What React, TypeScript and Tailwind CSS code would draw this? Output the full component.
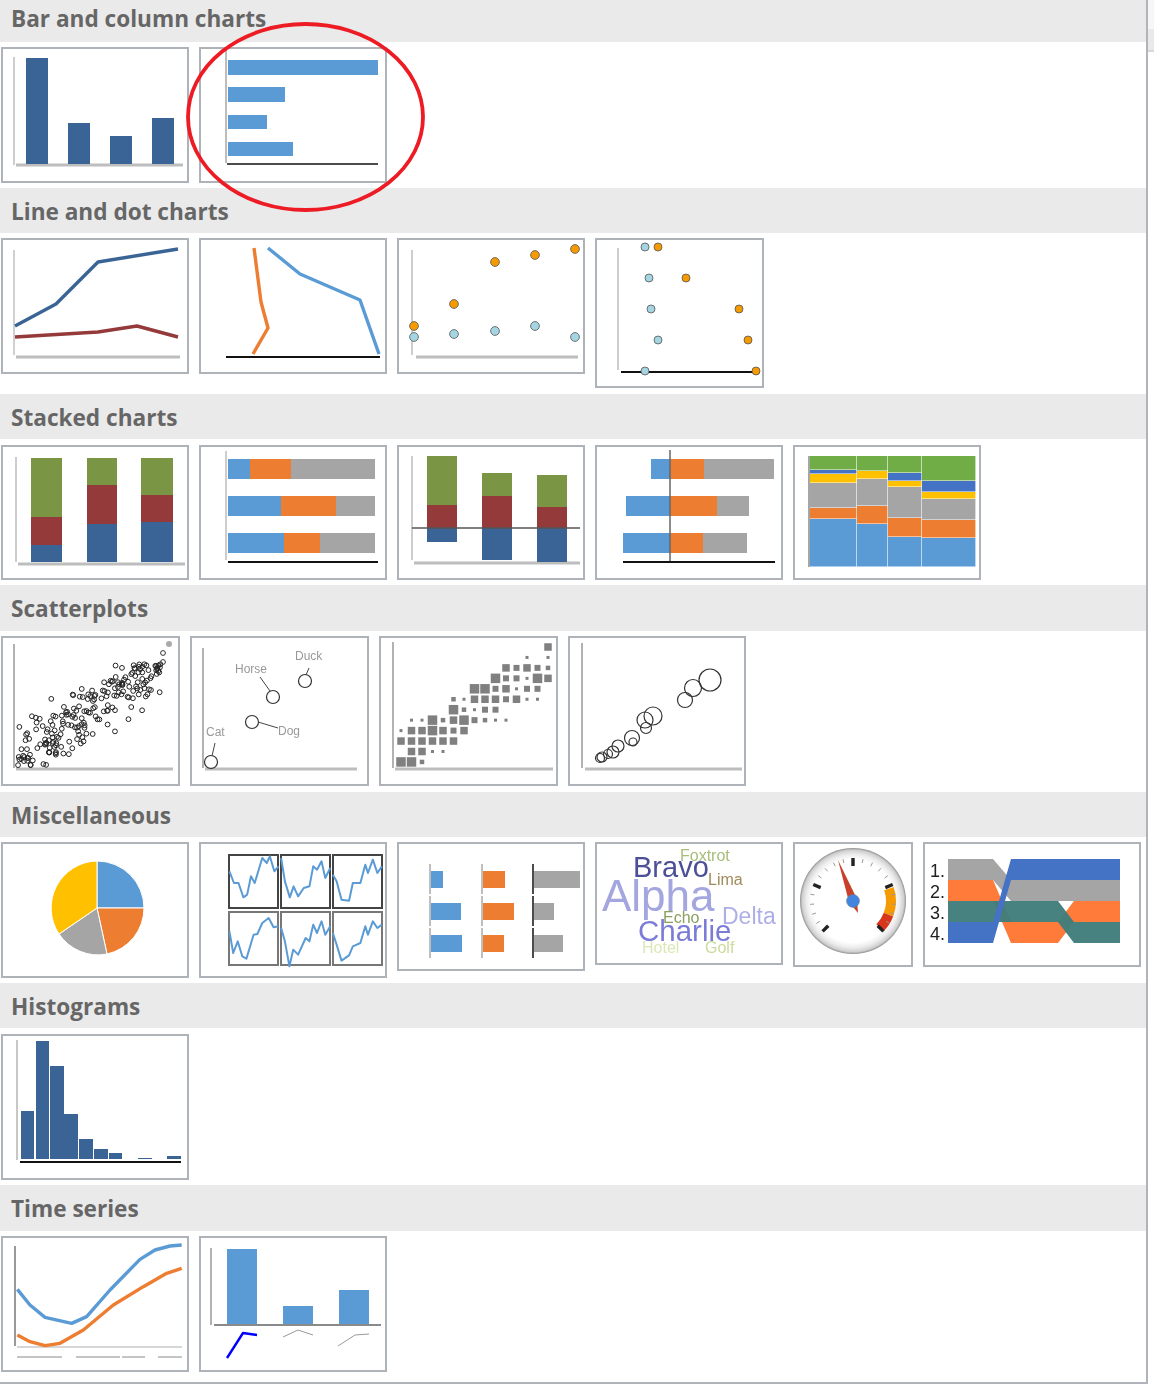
import { ReactNode } from "react";

const BLUE = "#5b9bd5";
const NAVY = "#3b6496";
const ORANGE = "#ed7d31";
const GRAY = "#a5a5a5";
const OLIVE = "#7a9645";
const MAROON = "#953a3a";

type Pt = number[];
// points read off the zoomed crops, scaled back to page pixels
const zp = (list: Pt[], sx: number, y0: number, sy = 3, x0 = 0) =>
  list.map(([x, y]) => `${x0 + x / sx},${y0 + y / sy}`).join(" ");

const Bar = ({ x, y, x2, y2, c, o }: { x: number; y: number; x2: number; y2: number; c: string; o?: number }) => (
  <rect x={x} y={y} width={x2 - x} height={y2 - y} fill={c} opacity={o} />
);
const Ln = ({ x1, y1, x2, y2, c = "#bdbdbd", w = 1.5 }: { x1: number; y1: number; x2: number; y2: number; c?: string; w?: number }) => (
  <line x1={x1} y1={y1} x2={x2} y2={y2} stroke={c} strokeWidth={w} />
);
const Poly = ({ pts, c, w = 3.4 }: { pts: string; c: string; w?: number }) => (
  <polyline points={pts} fill="none" stroke={c} strokeWidth={w} strokeLinejoin="round" />
);

const Card = ({ x, y, w, h, children }: { x: number; y: number; w: number; h: number; children?: ReactNode }) => (
  <div className="shrink-0 border-2 border-[#aeb2b9] bg-white">
    <svg width={w - 4} height={h - 4} viewBox={`${x + 2} ${y + 2} ${w - 4} ${h - 4}`} className="block blur-[0.6px]">
      {children}
    </svg>
  </div>
);

const Section = ({ title, headClass, rowClass, children }: { title: string; headClass: string; rowClass: string; children: ReactNode }) => (
  <section>
    <h2
      className={`flex items-center bg-[#eaeaea] pl-[11px] font-['Open_Sans','Noto_Sans',sans-serif] text-[22.6px] font-bold text-[#666666] ${headClass}`}
    >
      {title}
    </h2>
    <div className={`flex items-start gap-[10px] pl-px ${rowClass}`}>{children}</div>
  </section>
);

const BarColumn = () => (
  <Card x={1} y={47} w={188} h={136}>
    <Ln x1={14} y1={57} x2={14} y2={165} />
    <Ln x1={16} y1={165} x2={183} y2={165} w={3} />
    <Bar x={26} y={58} x2={48} y2={164} c={NAVY} />
    <Bar x={68} y={123} x2={90} y2={164} c={NAVY} />
    <Bar x={110} y={136} x2={132} y2={164} c={NAVY} />
    <Bar x={152} y={118} x2={174} y2={164} c={NAVY} />
  </Card>
);

const BarHoriz = () => (
  <Card x={199} y={47} w={188} h={136}>
    <Ln x1={226} y1={50} x2={226} y2={163} w={2} />
    <Bar x={228} y={60} x2={378} y2={75} c={BLUE} />
    <Bar x={228} y={87} x2={285} y2={102} c={BLUE} />
    <Bar x={228} y={115} x2={267} y2={129} c={BLUE} />
    <Bar x={228} y={142} x2={293} y2={156} c={BLUE} />
    <Ln x1={227} y1={164} x2={378} y2={164} c="#111" />
  </Card>
);

const LineA = () => (
  <Card x={1} y={238} w={188} h={136}>
    <Ln x1={14} y1={250} x2={14} y2={355} c="#c0c0c0" />
    <Ln x1={16} y1={357} x2={180} y2={357} w={3} />
    <Poly pts="15,326 56,304 98,262 178,249" c={NAVY} />
    <Poly pts="15,337 98,332 137,326 178,337" c={MAROON} />
  </Card>
);

const LineB = () => (
  <Card x={199} y={238} w={188} h={136}>
    <Poly pts="254,248 261,302 268,328 253,354" c={ORANGE} />
    <Poly pts="268,248 300,274 360,300 379,354" c={BLUE} />
    <Ln x1={226} y1={357} x2={380} y2={357} c="#111" w={2} />
  </Card>
);

const Dot = ({ x, y, c, r = 4.4 }: { x: number; y: number; c: string; r?: number }) => (
  <circle cx={x} cy={y} r={r} fill={c} stroke="#555" strokeWidth={0.8} />
);

const DotA = () => (
  <Card x={397} y={238} w={188} h={136}>
    <Ln x1={412} y1={250} x2={412} y2={355} />
    <Ln x1={416} y1={357} x2={578} y2={357} w={3} />
    {[[414, 337], [454, 334], [495, 331], [535, 326], [575, 337]].map(([x, y]) => (
      <Dot key={x} x={x} y={y} c="#a4d5e2" />
    ))}
    {[[414, 326], [454, 304], [495, 262], [535, 255], [575, 249]].map(([x, y]) => (
      <Dot key={x} x={x} y={y} c="#f59a00" />
    ))}
  </Card>
);

const DotB = () => (
  <Card x={595} y={238} w={169} h={150}>
    <Ln x1={618} y1={248} x2={618} y2={370} />
    <Ln x1={621} y1={372} x2={757} y2={372} c="#111" w={2} />
    {[[645, 247], [649, 278], [651, 309], [658, 340], [645, 371]].map(([x, y]) => (
      <Dot key={y} x={x} y={y} c="#a4d5e2" r={4} />
    ))}
    {[[658, 247], [686, 278], [739, 309], [748, 340], [756, 371]].map(([x, y]) => (
      <Dot key={y} x={x} y={y} c="#f59a00" r={4} />
    ))}
  </Card>
);

const StackA = () => (
  <Card x={1} y={445} w={188} h={135}>
    <Ln x1={16} y1={457} x2={16} y2={562} />
    <Ln x1={18} y1={564} x2={185} y2={564} w={3} />
    {[
      [31, 62, 517, 545],
      [87, 117, 485, 524],
      [141, 173, 495, 522],
    ].map(([a, b, g, r]) => (
      <g key={a}>
        <Bar x={a} y={458} x2={b} y2={g} c={OLIVE} />
        <Bar x={a} y={g} x2={b} y2={r} c={MAROON} />
        <Bar x={a} y={r} x2={b} y2={562} c={NAVY} />
      </g>
    ))}
  </Card>
);

const StackB = () => (
  <Card x={199} y={445} w={188} h={135}>
    <Ln x1={226} y1={451} x2={226} y2={560} />
    {[
      [459, 250, 291],
      [496, 281, 336],
      [533, 284, 320],
    ].map(([y, a, b]) => (
      <g key={y}>
        <Bar x={228} y={y} x2={a} y2={y + 20} c={BLUE} />
        <Bar x={a} y={y} x2={b} y2={y + 20} c={ORANGE} />
        <Bar x={b} y={y} x2={375} y2={y + 20} c={GRAY} />
      </g>
    ))}
    <Ln x1={228} y1={562} x2={378} y2={562} c="#111" w={2} />
  </Card>
);

const StackC = () => (
  <Card x={397} y={445} w={188} h={135}>
    <Ln x1={412} y1={456} x2={412} y2={560} />
    <Ln x1={414} y1={563} x2={580} y2={563} w={3} />
    {[
      [427, 457, 456, 505, 542],
      [482, 512, 473, 496, 560],
      [537, 567, 475, 507, 562],
    ].map(([a, b, t, g, e]) => (
      <g key={a}>
        <Bar x={a} y={t} x2={b} y2={g} c={OLIVE} />
        <Bar x={a} y={g} x2={b} y2={528} c={MAROON} />
        <Bar x={a} y={528} x2={b} y2={e} c={NAVY} />
      </g>
    ))}
    <Ln x1={412} y1={528} x2={580} y2={528} c="#555" />
  </Card>
);

const StackD = () => (
  <Card x={595} y={445} w={188} h={135}>
    {[
      [459, 651, 704, 774],
      [496, 626, 717, 749],
      [533, 623, 703, 747],
    ].map(([y, a, b, c]) => (
      <g key={y}>
        <Bar x={a} y={y} x2={670} y2={y + 20} c={BLUE} />
        <Bar x={670} y={y} x2={b} y2={y + 20} c={ORANGE} />
        <Bar x={b} y={y} x2={c} y2={y + 20} c={GRAY} />
      </g>
    ))}
    <Ln x1={670} y1={450} x2={670} y2={562} c="#666" />
    <Ln x1={623} y1={562} x2={775} y2={562} c="#111" w={2} />
  </Card>
);

const StackE = () => {
  const colors = ["#70ad47", "#4472c4", "#ffc000", GRAY, ORANGE, BLUE];
  const cols: { a: number; b: number; ys: (number | null)[] }[] = [
    { a: 810, b: 857, ys: [456, 470, 474, 483, 508, 519] },
    { a: 857, b: 888, ys: [456, null, 471, 479, 506, 524] },
    { a: 888, b: 922, ys: [456, 473, 481, 487, 518, 537] },
    { a: 922, b: 976, ys: [456, 481, 492, 499, 520, 538] },
  ];
  return (
    <Card x={793} y={445} w={188} h={135}>
      <Ln x1={809} y1={456} x2={809} y2={567} c="#888" />
      {cols.map((col) =>
        col.ys.map((y, i) => {
          if (y === null) return null;
          const next = col.ys.slice(i + 1).find((v) => v !== null) ?? 567;
          return <Bar key={col.a + "-" + i} x={col.a} y={y} x2={col.b - 0.6} y2={next - 0.5} c={colors[i]} />;
        }),
      )}
    </Card>
  );
};

// scatter cloud with a fixed seed so the picture never changes between runs
const cloud = (() => {
  let s = 42;
  const rnd = () => {
    s = (s * 16807) % 2147483647;
    return s / 2147483647;
  };
  const out: number[][] = [];
  for (let i = 0; i < 210; i++) {
    const t = rnd() * 0.92;
    const noise = (rnd() + rnd() - 1) * 38;
    let y = 757 - t * 100 + noise;
    if (y > 766) y = 766 - (y - 766);
    if (y < 664) y = 664 + (664 - y);
    out.push([18 + t * 155, y]);
  }
  return out;
})();

const ScatterA = () => (
  <Card x={1} y={636} w={179} h={150}>
    <Ln x1={14} y1={644} x2={14} y2={768} c="#999" />
    <Ln x1={16} y1={769} x2={173} y2={769} w={3} />
    {cloud.map(([x, y], i) => (
      <circle key={i} cx={x} cy={y} r={2.4} fill="none" stroke="#222" strokeWidth={1} />
    ))}
    <circle cx={169} cy={644} r={3} fill="#aaa" />
    <circle cx={163} cy={653} r={2.4} fill="none" stroke="#333" />
    <circle cx={163} cy={662} r={2.4} fill="none" stroke="#333" />
  </Card>
);

const Lbl = ({ x, y, t, size = 12, c = "#999999" }: { x: number; y: number; t: string; size?: number; c?: string }) => (
  <text x={x} y={y} fontSize={size} fill={c} className="font-['Liberation_Sans',sans-serif]">
    {t}
  </text>
);

const ScatterB = () => (
  <Card x={190} y={636} w={179} h={150}>
    <Ln x1={203} y1={648} x2={203} y2={768} c="#999" />
    <Ln x1={205} y1={769} x2={357} y2={769} w={3} />
    <Lbl x={235} y={673} t="Horse" />
    <Lbl x={295} y={660} t="Duck" />
    <Lbl x={206} y={736} t="Cat" />
    <Lbl x={278} y={735} t="Dog" />
    {[[273, 697], [305, 681], [252, 722], [211, 762]].map(([x, y]) => (
      <circle key={x} cx={x} cy={y} r={6.5} fill="none" stroke="#333" strokeWidth={1.2} />
    ))}
    <Ln x1={260} y1={677} x2={270} y2={691} c="#444" w={1} />
    <Ln x1={309} y1={668} x2={306} y2={675} c="#444" w={1} />
    <Ln x1={258} y1={722} x2={278} y2={728} c="#444" w={1} />
    <Ln x1={215} y1={743} x2={212} y2={756} c="#444" w={1} />
  </Card>
);

// binned scatter: one letter per bin, L largest down to x smallest
const BIN_SIZE: Record<string, number> = { L: 9.5, M: 7.5, m: 6, s: 4.5, x: 3 };
const BINS = [
  "..............M",
  "............x.x",
  "..........MmMms",
  ".........LmmxLM",
  ".......LLmMxmm.",
  ".....sxMMMmMxx.",
  ".....Lsxmm.....",
  ".xxLsMLmsxx....",
  "xMMLMmM........",
  "MMMMMM.........",
  ".MMxx..........",
  "LLs............",
];

const ScatterC = () => (
  <Card x={379} y={636} w={179} h={150}>
    <Ln x1={393} y1={642} x2={393} y2={768} c="#999" />
    <Ln x1={395} y1={769} x2={553} y2={769} w={3} />
    {BINS.map((row, r) =>
      row.split("").map((ch, i) => {
        const size = BIN_SIZE[ch];
        if (!size) return null;
        const cx = 401 + i * 10.5;
        const cy = 647 + r * 10.45;
        return <rect key={r + "-" + i} x={cx - size / 2} y={cy - size / 2} width={size} height={size} fill="#808080" />;
      }),
    )}
  </Card>
);

const ScatterD = () => (
  <Card x={568} y={636} w={178} h={150}>
    <Ln x1={582} y1={643} x2={582} y2={768} c="#999" />
    <Ln x1={585} y1={769} x2={742} y2={769} w={3} />
    {[
      [600, 758, 4.5],
      [602, 757, 5],
      [608, 754, 4.5],
      [613, 752, 6],
      [618, 746, 6],
      [632, 738, 7.5],
      [633, 742, 4],
      [646, 728, 5.5],
      [645, 720, 8],
      [653, 716, 9],
      [685, 700, 7.5],
      [693, 688, 8.5],
      [710, 680, 11],
    ].map(([x, y, r]) => (
      <circle key={x + "-" + y} cx={x} cy={y} r={r} fill="none" stroke="#333" strokeWidth={1.2} />
    ))}
  </Card>
);

const Pie = () => (
  <Card x={1} y={842} w={188} h={136}>
    <g stroke="#ffffff" strokeWidth={1}>
      <path d="M97 908 L97 861 A47 47 0 0 1 144 908 Z" fill={BLUE} />
      <path d="M97 908 L144 908 A47 47 0 0 1 107 954 Z" fill={ORANGE} />
      <path d="M97 908 L107 954 A47 47 0 0 1 59 934 Z" fill={GRAY} />
      <path d="M97 908 L59 934 A47 47 0 0 1 97 861 Z" fill="#ffc000" />
    </g>
  </Card>
);

const PANEL_LINES: Pt[][] = [
  [[608, 100], [620, 135], [632, 135], [645, 178], [655, 170], [665, 115], [675, 135], [695, 60], [707, 75], [715, 55], [727, 100], [738, 85]],
  [[745, 60], [755, 130], [768, 178], [778, 145], [790, 175], [805, 150], [820, 145], [830, 85], [840, 95], [852, 70], [862, 120], [875, 90]],
  [[882, 110], [892, 130], [905, 185], [925, 188], [935, 135], [955, 135], [968, 80], [975, 105], [988, 65], [1000, 105], [1012, 85]],
  [[608, 280], [618, 345], [630, 310], [642, 355], [653, 362], [672, 290], [682, 288], [695, 255], [712, 240], [725, 268], [738, 265]],
  [[745, 270], [755, 310], [767, 385], [777, 335], [790, 350], [810, 300], [820, 310], [830, 260], [840, 285], [852, 250], [862, 290], [875, 265]],
  [[882, 285], [892, 320], [905, 368], [925, 352], [935, 325], [955, 315], [968, 265], [975, 290], [988, 250], [1000, 270], [1012, 260]],
];

const Panels = () => (
  <Card x={199} y={842} w={188} h={136}>
    {[229, 281, 333].map((x) =>
      [855, 912].map((y) => (
        <rect key={x + "-" + y} x={x} y={y} width={49} height={53} fill="none" stroke={y === 855 ? "#444" : "#777"} strokeWidth={2} />
      )),
    )}
    {PANEL_LINES.map((pts, i) => (
      <Poly key={i} pts={zp(pts, 2.65, 838)} c={BLUE} w={2} />
    ))}
  </Card>
);

const SmallBars = () => (
  <Card x={397} y={842} w={188} h={129}>
    {[
      { x: 430, c: BLUE, ends: [443, 461, 462], ax: "#aaaaaa" },
      { x: 482, c: ORANGE, ends: [505, 514, 504], ax: "#aaaaaa" },
      { x: 533, c: GRAY, ends: [580, 554, 563], ax: "#111111" },
    ].map((col) => (
      <g key={col.x}>
        {[864, 896, 928].map((y) => (
          <Ln key={y} x1={col.x} y1={y} x2={col.x} y2={y + 30} c={col.ax} />
        ))}
        {[871, 903, 935].map((y, i) => (
          <Bar key={y} x={col.x + 1} y={y} x2={col.ends[i]} y2={y + 17} c={col.c} />
        ))}
      </g>
    ))}
  </Card>
);

const Cloud = () => (
  <Card x={595} y={842} w={188} h={123}>
    <Lbl x={680} y={861} t="Foxtrot" size={16} c="#a8bd7a" />
    <Lbl x={633} y={877} t="Bravo" size={29} c="#4a4f96" />
    <Lbl x={708} y={885} t="Lima" size={16} c="#a08b5e" />
    <Lbl x={602} y={911} t="Alpha" size={44} c="#a4a6e0" />
    <Lbl x={663} y={923} t="Echo" size={16} c="#8a9f60" />
    <Lbl x={722} y={924} t="Delta" size={23} c="#adaee6" />
    <Lbl x={638} y={941} t="Charlie" size={29.5} c="#7a7cd8" />
    <Lbl x={642} y={953} t="Hotel" size={16} c="#dbe7b5" />
    <Lbl x={705} y={953} t="Golf" size={16} c="#c8dc9b" />
  </Card>
);

const polar = (deg: number, r: number) => {
  const a = ((deg - 90) * Math.PI) / 180;
  return `${853 + Math.cos(a) * r} ${901 + Math.sin(a) * r}`;
};
const arc = (from: number, to: number, r: number) => `M${polar(from, r)} A${r} ${r} 0 0 1 ${polar(to, r)}`;

const Gauge = () => {
  const ticks: number[] = [];
  for (let d = -135; d <= 135; d += 13.5) ticks.push(d);
  return (
    <Card x={793} y={842} w={120} h={125}>
      <defs>
        <radialGradient id="ring">
          <stop offset="78%" stopColor="#ffffff" />
          <stop offset="88%" stopColor="#ececec" />
          <stop offset="96%" stopColor="#cfcfcf" />
          <stop offset="100%" stopColor="#8f8f8f" />
        </radialGradient>
      </defs>
      <circle cx={853} cy={901} r={53} fill="url(#ring)" />
      <path d={arc(71, 111, 38)} fill="none" stroke="#f59a00" strokeWidth={10} />
      <path d={arc(111, 135, 38)} fill="none" stroke="#d8361a" strokeWidth={10} />
      {ticks.map((d, i) => {
        const major = i % 5 === 0;
        return (
          <path
            key={d}
            d={`M${polar(d, major ? 35 : 39)} L${polar(d, 43)}`}
            stroke={major ? "#222" : "#999"}
            strokeWidth={major ? 3.4 : 1}
          />
        );
      })}
      <polygon points="838,860 857,899 858,913 849,902" fill="#c8402a" />
      <circle cx={853} cy={901} r={6.5} fill="#4285e0" stroke="#7a7a7a" strokeWidth={0.5} />
    </Card>
  );
};

const Bump = () => (
  <Card x={923} y={842} w={218} h={125}>
    <polygon points="948,859 993,859 1011,880 1120,880 1120,901 1011,901 993,880 948,880" fill={GRAY} />
    <polygon points="948,880 993,880 1011,922 1058,922 1074,901 1120,901 1120,922 1074,922 1058,943 1011,943 993,901 948,901" fill="#fe7b3a" />
    <polygon points="948,901 1058,901 1074,922 1120,922 1120,943 1074,943 1058,922 948,922" fill="#3f7d7b" opacity={0.96} />
    <polygon points="948,922 993,922 1011,859 1120,859 1120,880 1011,880 993,943 948,943" fill="#4472c4" />
    {["1.", "2.", "3.", "4."].map((t, i) => (
      <Lbl key={t} x={930} y={877 + i * 21} t={t} size={18} c="#222222" />
    ))}
  </Card>
);

const Histogram = () => (
  <Card x={1} y={1034} w={188} h={146}>
    <Ln x1={17} y1={1040} x2={17} y2={1160} c="#b5b5b5" />
    {[
      [21, 34, 1111],
      [36, 49, 1041],
      [50, 64, 1066],
      [64, 78, 1114],
      [79, 93, 1139],
      [94, 108, 1149],
      [109, 122, 1153],
      [138, 152, 1158],
      [167, 181, 1156],
    ].map(([a, b, t]) => (
      <Bar key={a} x={a} y={t} x2={b} y2={1159} c={NAVY} />
    ))}
    <Ln x1={20} y1={1162} x2={181} y2={1162} c="#111" w={2} />
  </Card>
);

const TimeA = () => (
  <Card x={1} y={1236} w={188} h={136}>
    <Ln x1={15} y1={1246} x2={15} y2={1346} c="#777" />
    <Ln x1={17} y1={1347} x2={182} y2={1347} c="#c8c8c8" />
    {[[17, 62], [76, 120], [122, 145], [158, 182]].map(([a, b]) => (
      <Ln key={a} x1={a} y1={1357} x2={b} y2={1357} c="#b0b0b0" />
    ))}
    <Poly
      pts={zp([[52, 778], [90, 825], [135, 862], [215, 880], [260, 860], [330, 780], [420, 688], [465, 660], [510, 648], [545, 645]], 3, 1030)}
      c={BLUE}
    />
    <Poly
      pts={zp([[52, 915], [90, 935], [135, 947], [180, 940], [250, 900], [340, 825], [430, 770], [500, 730], [545, 715]], 3, 1030)}
      c={ORANGE}
    />
  </Card>
);

const TimeB = () => (
  <Card x={199} y={1236} w={188} h={136}>
    <Ln x1={211} y1={1248} x2={211} y2={1325} c="#999" />
    <Ln x1={214} y1={1325} x2={381} y2={1325} c="#8a8a8a" w={2} />
    <Bar x={227} y={1249} x2={257} y2={1324} c={BLUE} />
    <Bar x={283} y={1306} x2={313} y2={1324} c={BLUE} />
    <Bar x={339} y={1290} x2={369} y2={1324} c={BLUE} />
    <Poly pts="227,1358 243,1333 257,1335" c="#0000ff" w={2.4} />
    <Poly pts="283,1337 298,1330 313,1335" c="#999" w={1} />
    <Poly pts="338,1346 355,1335 369,1334" c="#999" w={1} />
  </Card>
);

export default function App() {
  return (
    <div className="relative flex h-[1384px] w-[1154px] overflow-hidden bg-white">
      <main className="h-full w-[1148px] shrink-0 border-b-2 border-r-2 border-[#b0b4ba]">
        <Section title="Bar and column charts" headClass="h-[42px] pb-[4px]" rowClass="h-[146px] pt-[5px]">
          <BarColumn />
          <BarHoriz />
        </Section>
        <Section title="Line and dot charts" headClass="h-[45px] pt-[2px]" rowClass="h-[161px] pt-[5px]">
          <LineA />
          <LineB />
          <DotA />
          <DotB />
        </Section>
        <Section title="Stacked charts" headClass="h-[45px] pt-[2px]" rowClass="h-[146px] pt-[6px]">
          <StackA />
          <StackB />
          <StackC />
          <StackD />
          <StackE />
        </Section>
        <Section title="Scatterplots" headClass="h-[46px] pt-[2px]" rowClass="h-[161px] pt-[5px]">
          <ScatterA />
          <ScatterB />
          <ScatterC />
          <ScatterD />
        </Section>
        <Section title="Miscellaneous" headClass="h-[45px] pt-[2px]" rowClass="h-[146px] pt-[5px]">
          <Pie />
          <Panels />
          <SmallBars />
          <Cloud />
          <Gauge />
          <Bump />
        </Section>
        <Section title="Histograms" headClass="h-[45px] pt-[2px]" rowClass="h-[157px] pt-[6px]">
          <Histogram />
        </Section>
        <Section title="Time series" headClass="h-[46px] pt-[2px]" rowClass="h-[146px] pt-[5px]">
          <TimeA />
          <TimeB />
        </Section>
      </main>
      <div className="flex-1">
        <div className="h-[29px] bg-[#f6f6f6]" />
        <div className="h-[23px] border-b-2 border-[#d8d8d8] bg-[#e9e9e9]" />
      </div>
      <svg width={1154} height={230} className="pointer-events-none absolute left-0 top-0">
        <ellipse cx={305.5} cy={117} rx={117.5} ry={93} fill="none" stroke="#ed1c24" strokeWidth={3.8} />
      </svg>
    </div>
  );
}
